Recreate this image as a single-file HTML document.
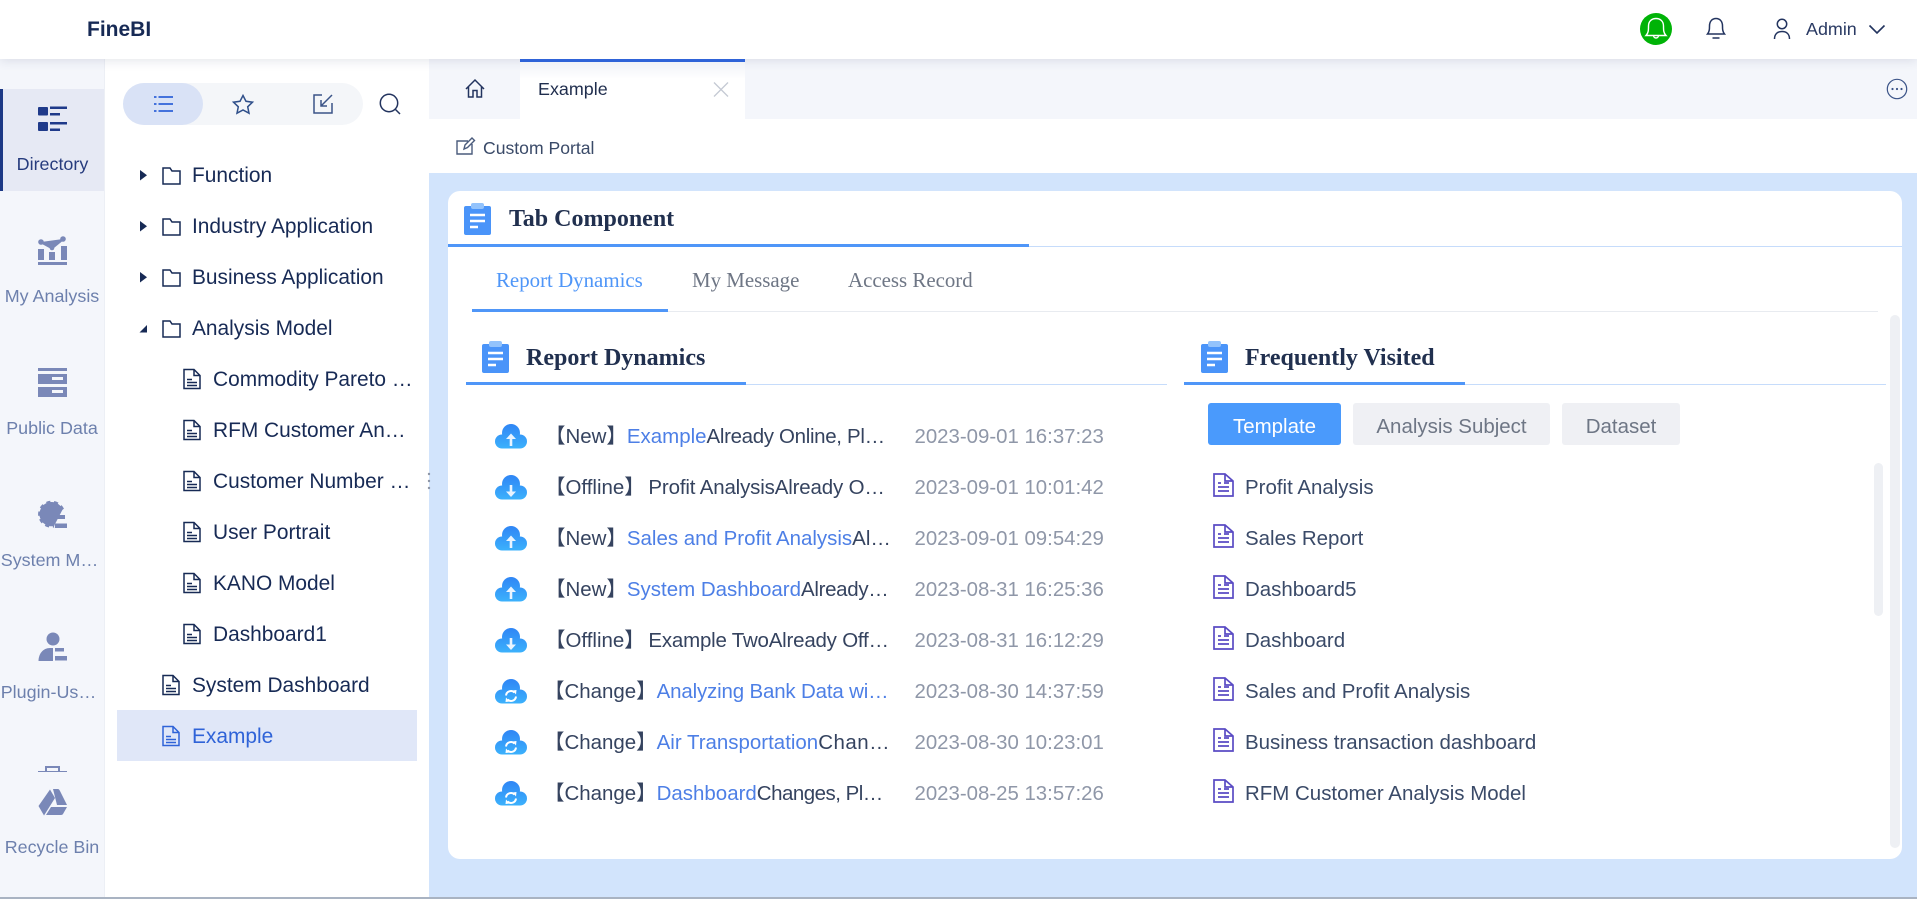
<!DOCTYPE html>
<html lang="en"><head><meta charset="utf-8"><title>FineBI</title>
<style>
html,body{margin:0;padding:0;width:1917px;height:899px;overflow:hidden;background:#fff}
body{position:relative;font-family:"Liberation Sans","Noto Sans CJK SC",sans-serif}
.b{position:absolute}
.t{position:absolute;white-space:pre;line-height:24px;height:24px}
.tr{font-size:20.9px;color:#172a55}
.r{font-size:17.92px;color:#6d80ad;text-align:center;left:0;width:104px}
.s{font-family:"Liberation Serif","Noto Serif CJK SC",serif;font-weight:bold;color:#21304f;font-size:24px}
.l{font-size:20.48px;color:#35435f}
.l a{color:#4d7fe6}
.d{font-size:20.4px;color:#8f97a8;left:914.5px}
.v{font-size:20.48px;color:#3a4a68;left:1245px}
.tb{position:absolute;font-family:"Liberation Serif",serif;font-size:20.9px;line-height:24px;color:#6e7685;top:268px;white-space:pre}
.btn{position:absolute;top:403px;height:42px;line-height:48px;text-align:center;font-size:20.48px;background:#eff0f4;color:#6e7685;border-radius:3px}
svg.o{position:absolute;left:0;top:0;z-index:6}
</style></head><body>

<div class="b" style="left:0;top:59px;width:105px;height:838px;background:#f4f6fb;border-right:1px solid #eceff5;box-sizing:border-box"></div>
<div class="b" style="left:0;top:89px;width:104px;height:102px;background:#e6e9f4"></div>
<div class="b" style="left:0;top:89px;width:3px;height:102px;background:#1c3885"></div>
<div class="b" style="left:429px;top:59px;width:1488px;height:60px;background:#f4f6fb"></div>
<div class="b" style="left:429px;top:119px;width:1488px;height:54px;background:#fff"></div>
<div class="b" style="left:429px;top:173px;width:1488px;height:724px;background:#d2e4fc"></div>
<div class="b" style="left:0;top:897px;width:1917px;height:2px;background:#a9b3c2"></div>
<div class="b" style="left:0;top:0;width:1917px;height:59px;background:#fff;box-shadow:0 2px 10px rgba(40,50,90,.12);z-index:3"></div>

<div class="b" style="left:520px;top:59px;width:225px;height:60px;background:linear-gradient(#eef0f6,#fff 20px);z-index:4"></div>
<div class="b" style="left:520px;top:59px;width:225px;height:3px;background:#2f63d8;z-index:4"></div>

<div class="b" style="left:123px;top:83px;width:240px;height:42px;border-radius:21px;background:#f4f6f9"></div>
<div class="b" style="left:123px;top:83px;width:80px;height:42px;border-radius:21px;background:#d9e2f6"></div>
<div class="b" style="left:117px;top:710px;width:300px;height:51px;background:#e0e7f8"></div>

<div class="b" style="left:448px;top:191px;width:1454px;height:668px;background:#fff;border-radius:12px"></div>
<div class="b" style="left:448px;top:246px;width:1454px;height:1px;background:#c6dcfb"></div>
<div class="b" style="left:448px;top:244px;width:581px;height:3px;background:#4f96f8"></div>
<div class="b" style="left:472px;top:311px;width:1406px;height:1px;background:#e8ebf0"></div>
<div class="b" style="left:472px;top:309px;width:196px;height:3px;background:#4f96f8"></div>
<div class="b" style="left:466px;top:384px;width:701px;height:1px;background:#c6dcfb"></div>
<div class="b" style="left:466px;top:382px;width:280px;height:3px;background:#4f96f8"></div>
<div class="b" style="left:1184px;top:384px;width:702px;height:1px;background:#c6dcfb"></div>
<div class="b" style="left:1184px;top:382px;width:281px;height:3px;background:#4f96f8"></div>
<div class="b" style="left:1874px;top:463px;width:9px;height:153px;background:#eef0f4;border-radius:5px"></div>
<div class="b" style="left:1890px;top:315px;width:10px;height:533px;background:#eef0f4;border-radius:5px"></div>
<div class="btn" style="left:1208px;width:133px;background:#4a9afc;color:#fff">Template</div>
<div class="btn" style="left:1353px;width:197px">Analysis Subject</div>
<div class="btn" style="left:1562px;width:118px">Dataset</div>

<div class="t" style="left:87px;top:18px;font-size:21px;font-weight:bold;color:#172a55;z-index:5">FineBI</div>
<div class="t" style="left:1806px;top:17px;font-size:17.92px;color:#2a3a63;z-index:5">Admin</div>
<div class="t" style="left:538px;top:77px;font-size:17.92px;color:#1f2d4d;z-index:5">Example</div>
<div class="t" style="left:483px;top:135.5px;font-size:17.6px;color:#3a4a68">Custom Portal</div>

<div class="t r" style="top:152px;left:.5px;color:#263b7d">Directory</div>
<div class="t r" style="top:284px">My Analysis</div>
<div class="t r" style="top:416px">Public Data</div>
<div class="t r" style="top:548px;left:-2.5px">System M…</div>
<div class="t r" style="top:680px;left:-3.5px">Plugin-Us…</div>
<div class="t r" style="top:835px">Recycle Bin</div>

<div class="t tr" style="left:192px;top:164px">Function</div>
<div class="t tr" style="left:192px;top:215px">Industry Application</div>
<div class="t tr" style="left:192px;top:266px">Business Application</div>
<div class="t tr" style="left:192px;top:317px">Analysis Model</div>
<div class="t tr" style="left:213px;top:368px">Commodity Pareto …</div>
<div class="t tr" style="left:213px;top:419px">RFM Customer An…</div>
<div class="t tr" style="left:213px;top:470px">Customer Number …</div>
<div class="t tr" style="left:213px;top:521px">User Portrait</div>
<div class="t tr" style="left:213px;top:572px">KANO Model</div>
<div class="t tr" style="left:213px;top:623px">Dashboard1</div>
<div class="t tr" style="left:192px;top:674px">System Dashboard</div>
<div class="t tr" style="left:192px;top:725px;color:#2f63d8">Example</div>

<div class="t s" style="left:509px;top:207px">Tab Component</div>
<div class="tb" style="left:496px;color:#4f96f8">Report Dynamics</div>
<div class="tb" style="left:692px">My Message</div>
<div class="tb" style="left:848px">Access Record</div>
<div class="t s" style="left:526px;top:346px">Report Dynamics</div>
<div class="t s" style="left:1245px;top:346px">Frequently Visited</div>

<div class="t l" style="left:545px;top:425px">【New】<a>Example</a><span style="letter-spacing:-.32px">Already Online, Pl…</span></div>
<div class="t l" style="left:545px;top:476px">【Offline<span style="padding-right:3.7px">】</span><span style="letter-spacing:-.15px">Profit AnalysisAlready O…</span></div>
<div class="t l" style="left:545px;top:527px">【New】<a>Sales and Profit Analysis</a>Al…</div>
<div class="t l" style="left:545px;top:578px">【New】<a>System Dashboard</a><span style="letter-spacing:-.3px">Already…</span></div>
<div class="t l" style="left:545px;top:629px">【Offline<span style="padding-right:3.7px">】</span><span style="letter-spacing:-.2px">Example TwoAlready Off…</span></div>
<div class="t l" style="left:544px;top:680px">【Change】<a style="letter-spacing:-.16px">Analyzing Bank Data wi…</a></div>
<div class="t l" style="left:544px;top:731px">【Change】<a>Air Transportation</a><span style="letter-spacing:.5px">Chan…</span></div>
<div class="t l" style="left:544px;top:782px">【Change】<a>Dashboard</a><span style="letter-spacing:-.5px">Changes, Pl…</span></div>

<div class="t d" style="top:425px">2023-09-01 16:37:23</div>
<div class="t d" style="top:476px">2023-09-01 10:01:42</div>
<div class="t d" style="top:527px">2023-09-01 09:54:29</div>
<div class="t d" style="top:578px">2023-08-31 16:25:36</div>
<div class="t d" style="top:629px">2023-08-31 16:12:29</div>
<div class="t d" style="top:680px">2023-08-30 14:37:59</div>
<div class="t d" style="top:731px">2023-08-30 10:23:01</div>
<div class="t d" style="top:782px">2023-08-25 13:57:26</div>

<div class="t v" style="top:476px">Profit Analysis</div>
<div class="t v" style="top:527px">Sales Report</div>
<div class="t v" style="top:578px">Dashboard5</div>
<div class="t v" style="top:629px">Dashboard</div>
<div class="t v" style="top:680px">Sales and Profit Analysis</div>
<div class="t v" style="top:731px">Business transaction dashboard</div>
<div class="t v" style="top:782px">RFM Customer Analysis Model</div>

<svg class="o" width="1917" height="899" viewBox="0 0 1917 899" fill="none">
<defs>
<linearGradient id="cg" gradientUnits="userSpaceOnUse" x1="0" y1="0" x2="0" y2="25"><stop offset="0" stop-color="#2f85f5"/><stop offset="1" stop-color="#3cb2fc"/></linearGradient>
<symbol id="folder" width="19" height="18" viewBox="0 0 19 18" overflow="visible"><path d="M1 1H8L10 4H18V17H1Z" stroke="#172a55" stroke-width="1.5"/></symbol>
<symbol id="doc" width="18" height="21" viewBox="0 0 18 21" overflow="visible"><path d="M1 1H11L17 7V20H1ZM11 1V7H17M4 11H9M4 14H14M4 17H14" stroke="currentColor" stroke-width="1.5"/></symbol>
<symbol id="pdoc" width="21" height="24" viewBox="0 0 21 24" overflow="visible"><path d="M1 1H12L20 8V23H1ZM12 1V8H20M5 10H8M11 10H16M5 14H16M5 18H16" stroke="#5a4bc4" stroke-width="1.7"/></symbol>
<symbol id="clip" width="27" height="32" viewBox="0 0 27 32"><rect x="0" y="3" width="27" height="29" rx="2" fill="#4a94f9"/><rect x="7" y="0" width="13" height="6" rx="2" fill="#93c3fc"/><path d="M6 12H21M6 18H21M6 24H14" stroke="#fff" stroke-width="2.6"/></symbol>
<symbol id="cloud" width="32" height="25" viewBox="0 0 32 25"><g fill="url(#cg)"><circle cx="16" cy="9" r="9"/><circle cx="7" cy="17.5" r="7"/><circle cx="25" cy="17.5" r="7"/><rect x="7" y="12" width="18" height="12.500"/></g></symbol>
<symbol id="cu" width="32" height="25" viewBox="0 0 32 25"><use href="#cloud"/><path d="M16 9.500L11 15H14.700V22H17.300V15H21Z" fill="#e9f4ff"/></symbol>
<symbol id="cd" width="32" height="25" viewBox="0 0 32 25"><use href="#cloud"/><path d="M16 22L11 16.500H14.700V10H17.300V16.500H21Z" fill="#e9f4ff"/></symbol>
<symbol id="cr" width="32" height="25" viewBox="0 0 32 25"><use href="#cloud"/><g stroke="#fff" stroke-width="2"><path d="M11 16.500A5 5 0 0 1 19.500 13.500"/><path d="M21 17.500A5 5 0 0 1 12.500 20.500"/></g><path d="M17.500 11.500L21.500 11L21 15.500ZM14.500 22.500L10.500 23L11 18.500Z" fill="#fff"/></symbol>
</defs>

<!-- header -->
<g>
<circle cx="1656" cy="29" r="16" fill="#00b307"/>
<path d="M1646 35.500C1648.500 33 1648.500 30 1648.500 26C1648.500 21 1652 18.500 1656 18.500C1660 18.500 1663.500 21 1663.500 26C1663.500 30 1663.500 33 1666 35.500ZM1653.500 35.500A2.500 2.500 0 0 0 1658.500 35.500" stroke="#fff" stroke-width="1.4"/>
<path d="M1707.500 34C1709.500 31.500 1709.500 29 1709.500 26C1709.500 21.500 1712 18.500 1716 18.500C1720 18.500 1722.500 21.500 1722.500 26C1722.500 29 1722.500 31.500 1724.500 34ZM1712.500 38H1719.500" stroke="#23345f" stroke-width="1.5"/>
<circle cx="1782" cy="24" r="4.700" stroke="#23345f" stroke-width="1.500"/>
<path d="M1774.500 39C1774.500 34 1777.500 31.500 1782 31.500C1786.500 31.500 1789.500 34 1789.500 39" stroke="#23345f" stroke-width="1.500"/>
<path d="M1869.500 25.500L1877 33L1884.500 25.500" stroke="#23345f" stroke-width="1.600"/>
</g>
<circle cx="1897" cy="89" r="9.700" stroke="#3b5488" stroke-width="1.200"/>
<circle cx="1892.500" cy="89" r="1.100" fill="#3b5488"/><circle cx="1897" cy="89" r="1.100" fill="#3b5488"/><circle cx="1901.500" cy="89" r="1.100" fill="#3b5488"/>

<!-- tab bar -->
<path d="M466 89L475 80L484 89M468.500 87V97H473V90.500H477V97H481.500V87" stroke="#23345f" stroke-width="1.500"/>
<path d="M714 82.500L728 96.500M728 82.500L714 96.500" stroke="#c4c9d4" stroke-width="1.300"/>
<path d="M468 141H457V154H472V144M464 149L465 145L472 138L474.500 140.500L467.500 147.500Z" stroke="#4a5b7c" stroke-width="1.400"/>

<!-- rail icons -->
<g fill="#1f3a8a"><rect x="38" y="107" width="10" height="8.500" rx="1"/><rect x="50" y="106.500" width="17" height="2.500"/><rect x="50" y="113" width="10" height="2.500"/><rect x="38" y="122" width="10" height="9" rx="1"/><rect x="50" y="122" width="17" height="2.500"/><rect x="50" y="128.500" width="10" height="2.500"/></g>
<g fill="#7a88b8">
<rect x="38" y="249" width="6" height="11"/><rect x="49" y="252" width="6" height="8"/><rect x="61" y="246" width="6" height="14"/><rect x="38" y="262" width="29" height="3"/>
<path d="M41 242L52 248L63 239" stroke="#7a88b8" stroke-width="2.500"/><circle cx="41" cy="242" r="2.800"/><circle cx="52" cy="248" r="2.300"/><circle cx="63" cy="239" r="2.800"/>
<rect x="38" y="368" width="29" height="3"/>
<path fill-rule="evenodd" d="M38 374H67V384H38ZM52 377V380H63V377ZM38 387H67V397H38ZM52 390V393H63V390Z"/>
<path d="M60.400 510.700A9.500 9.500 0 1 0 54 523.200" stroke="#7a88b8" stroke-width="5"/>
<path d="M62.600 509.500A12 12 0 1 0 54 526" stroke="#7a88b8" stroke-width="3" stroke-dasharray="4 3.500"/>
<rect x="55" y="515" width="10" height="4"/><rect x="55" y="523.500" width="12" height="4.500"/>
<circle cx="53" cy="639" r="6.500"/>
<path d="M38.500 661C38.500 654 43 648 50 648H53V661Z"/><rect x="55" y="648" width="9" height="3.500"/><rect x="55" y="656" width="12" height="4.500"/>
<path d="M45 766H60V771H58V768H47V771H45ZM38 771H67V772H38Z"/>
<path d="M50 789.500L55 798L44 815.500L38.500 806ZM53 789H58Q59 789 60 791L67 805H57ZM46 815L51 807H67L63 814Q62.500 815 61 815Z"/>
</g>

<!-- tree head -->
<g stroke="#2f63d8" stroke-width="1.700"><path d="M158.500 97H173M158.500 104H173M158.500 111H173"/><path d="M154 97H156.500M154 104H156.500M154 111H156.500"/></g>
<path d="M243 95.500L246 101.300L252.500 102.200L247.700 106.800L249 113.200L243 110L237 113.200L238.300 106.800L233.500 102.200L240 101.300Z" stroke="#2f4f8a" stroke-width="1.500"/>
<path d="M322 95H314V113H332V103M332 95L321 106M321 100V106H327" stroke="#3b5488" stroke-width="1.500"/>
<circle cx="389" cy="103" r="8.700" stroke="#23345f" stroke-width="1.500"/><path d="M395.500 109.500L400 114" stroke="#23345f" stroke-width="1.500"/>

<!-- tree arrows -->
<g fill="#172a55"><path d="M140 170V180.500L147 175.200Z"/><path d="M140 221V231.500L147 226.200Z"/><path d="M140 272V282.500L147 277.200Z"/><path d="M147 325V332.500H139.500Z"/></g>
<use href="#folder" x="162" y="167"/><use href="#folder" x="162" y="218"/><use href="#folder" x="162" y="269"/><use href="#folder" x="162" y="320"/>
<g color="#172a55"><use href="#doc" x="183" y="368.500"/><use href="#doc" x="183" y="419.500"/><use href="#doc" x="183" y="470.500"/><use href="#doc" x="183" y="521.500"/><use href="#doc" x="183" y="572.500"/><use href="#doc" x="183" y="623.500"/><use href="#doc" x="162" y="674.500"/></g>
<use href="#doc" x="162" y="725.500" color="#2f63d8"/>
<g fill="#8d95a5"><circle cx="429" cy="474" r="1.200"/><circle cx="429" cy="481" r="1.200"/><circle cx="429" cy="488" r="1.200"/></g>

<!-- clipboards -->
<use href="#clip" x="464" y="203"/><use href="#clip" x="482" y="341"/><use href="#clip" x="1201" y="341"/>

<!-- clouds -->
<use href="#cu" x="495" y="424"/><use href="#cd" x="495" y="475"/><use href="#cu" x="495" y="526"/><use href="#cu" x="495" y="577"/><use href="#cd" x="495" y="628"/><use href="#cr" x="495" y="679"/><use href="#cr" x="495" y="730"/><use href="#cr" x="495" y="781"/>

<!-- purple docs -->
<use href="#pdoc" x="1213" y="473"/><use href="#pdoc" x="1213" y="524"/><use href="#pdoc" x="1213" y="575"/><use href="#pdoc" x="1213" y="626"/><use href="#pdoc" x="1213" y="677"/><use href="#pdoc" x="1213" y="728"/><use href="#pdoc" x="1213" y="779"/>
</svg>
</body></html>
